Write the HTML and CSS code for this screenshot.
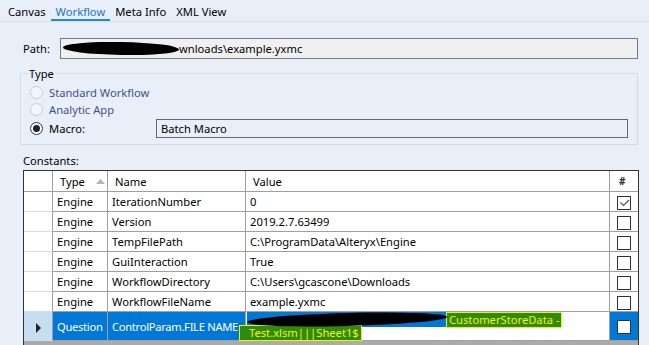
FILE: index.html
```html
<!DOCTYPE html>
<html lang="en">
<head>
    <meta charset="UTF-8">
    <title>Workflow Configuration</title>
    <link rel="stylesheet" href="styles.css">
</head>
<body>
    <div class="tabs">
        <span class="tab">Canvas</span>
        <span class="tab active">Workflow</span>
        <span class="tab">Meta Info</span>
        <span class="tab">XML View</span>
    </div>

    <div class="path-row">
        <label class="path-label">Path:</label>
        <div class="path-box"><span class="redact path-redact"></span>wnloads\example.yxmc</div>
    </div>

    <fieldset class="type-group">
        <legend>Type</legend>
        <div class="radio-row disabled">
            <span class="radio"></span>
            <span class="radio-text">Standard Workflow</span>
        </div>
        <div class="radio-row disabled">
            <span class="radio"></span>
            <span class="radio-text">Analytic App</span>
        </div>
        <div class="radio-row macro-row">
            <span class="radio checked"></span>
            <span class="radio-text macro-label">Macro:</span>
            <div class="macro-box">Batch Macro</div>
        </div>
    </fieldset>

    <div class="constants-label">Constants:</div>

    <div class="grid-wrap">
        <table class="grid">
            <colgroup>
                <col class="c-rh">
                <col class="c-type">
                <col class="c-name">
                <col class="c-value">
                <col class="c-flag">
            </colgroup>
            <thead>
                <tr>
                    <th class="rh"></th>
                    <th>Type<svg class="sort" width="9" height="5" viewBox="0 0 9 5"><path d="M0 5 L4.5 0 L9 5 Z" fill="#b4b4b4"/></svg></th>
                    <th>Name</th>
                    <th>Value</th>
                    <th class="flag hash">#</th>
                </tr>
            </thead>
            <tbody>
                <tr>
                    <td class="rh"></td><td>Engine</td><td>IterationNumber</td><td>0</td>
                    <td class="flag"><span class="cb"><svg width="11" height="11" viewBox="0 0 11 11"><path d="M1.5 5.5 L4.5 8.5 L10 3" fill="none" stroke="#555" stroke-width="1.2"/></svg></span></td>
                </tr>
                <tr>
                    <td class="rh"></td><td>Engine</td><td>Version</td><td>2019.2.7.63499</td>
                    <td class="flag"><span class="cb"></span></td>
                </tr>
                <tr>
                    <td class="rh"></td><td>Engine</td><td>TempFilePath</td><td>C:\ProgramData\Alteryx\Engine</td>
                    <td class="flag"><span class="cb"></span></td>
                </tr>
                <tr>
                    <td class="rh"></td><td>Engine</td><td>GuiInteraction</td><td>True</td>
                    <td class="flag"><span class="cb"></span></td>
                </tr>
                <tr>
                    <td class="rh"></td><td>Engine</td><td>WorkflowDirectory</td><td>C:\Users\gcascone\Downloads</td>
                    <td class="flag"><span class="cb"></span></td>
                </tr>
                <tr>
                    <td class="rh"></td><td>Engine</td><td>WorkflowFileName</td><td>example.yxmc</td>
                    <td class="flag"><span class="cb"></span></td>
                </tr>
                <tr class="selected">
                    <td class="rh"><span class="arrow"></span></td>
                    <td>Question</td>
                    <td>ControlParam.FILE NAME</td>
                    <td class="editing">
                        <div class="edit-line"><span class="sel-text"><span class="redact value-redact"></span><span class="marked">CustomerStoreData -</span></span></div>
                        <div class="edit-line"><span class="marked second">Test.xlsm|||Sheet1$</span></div>
                    </td>
                    <td class="flag"><span class="cb"></span></td>
                </tr>
            </tbody>
        </table>
    </div>
</body>
</html>
```

FILE: styles.css
```css
:root {
    --bg: #e9eff9;
    --text: #000000;
    --muted: #3f5189;
    --accent: #0078d7;
    --grid-line: #a0a0a0;
    --group-line: #d6dae1;
}

html, body {
    height: 100%;
}

body {
    margin: 0;
    background-color: var(--bg);
    font-family: "Segoe UI", "Noto Sans", sans-serif;
    font-size: 11.2px;
    color: var(--text);
    overflow: hidden;
}

/* tab strip */
.tabs {
    display: flex;
    padding: 0 0 0 3px;
    border-bottom: 1px solid #d8dde6;
}

.tab {
    padding: 4px 5px 0;
    line-height: 15px;
    border-bottom: 2px solid transparent;
}

.tab.active {
    color: #1a73c9;
    border-bottom-color: #1e88e5;
}

/* path */
.path-row {
    display: flex;
    align-items: center;
    margin: 16px 11px 0 23px;
}

.path-label {
    width: 37px;
}

.path-box {
    flex: 1;
    height: 19px;
    line-height: 19px;
    border: 1px solid #7c7c7c;
    background: #f0f0f0;
    padding-left: 2px;
    display: flex;
    align-items: center;
}

.redact {
    display: inline-block;
    background: #000;
    border-radius: 50%;
}

.path-redact {
    width: 116px;
    height: 13px;
    transform: rotate(1deg);
}

/* type group */
.type-group {
    margin: 7px 11px 0 20px;
    padding: 3px 9px 6px;
    border: 1px solid var(--group-line);
}

.type-group legend {
    padding: 0 1px;
    margin-left: -2px;
    line-height: 15px;
}

.radio-row {
    display: flex;
    align-items: center;
    height: 17px;
}

.radio {
    width: 11px;
    height: 11px;
    border: 1px solid #c9ccd2;
    border-radius: 50%;
    background: #f4f6fa;
    margin-right: 6px;
    display: flex;
    align-items: center;
    justify-content: center;
}

.radio.checked {
    border-color: #333;
    background: #fff;
}

.radio.checked::after {
    content: "";
    width: 7px;
    height: 7px;
    border-radius: 50%;
    background: #222;
}

.disabled .radio-text {
    color: var(--muted);
}

.macro-row {
    height: 20px;
}

.macro-label {
    width: 107px;
}

.macro-box {
    flex: 1;
    height: 17px;
    line-height: 17px;
    border: 1px solid #6a6a6a;
    padding-left: 4px;
}

/* constants grid */
.constants-label {
    margin: 8px 0 0 23px;
    line-height: 16px;
}

.grid-wrap {
    margin: 1px 10px 0 23px;
    border: 1px solid #333;
    background: #ababab;
    height: 220px;
}

.grid {
    width: 100%;
    table-layout: fixed;
    border-collapse: separate;
    border-spacing: 0;
}

.c-rh { width: 29px; }
.c-type { width: 55px; }
.c-name { width: 138px; }
.c-value { width: 364px; }

.grid th,
.grid td {
    background: #fff;
    border-right: 1px solid var(--grid-line);
    border-bottom: 1px solid var(--grid-line);
    padding: 0 0 0 4px;
    text-align: left;
    font-weight: normal;
    white-space: nowrap;
    overflow: visible;
}

.grid tr {
    height: 20px;
}

.grid thead tr {
    height: 21px;
}

.grid th {
    padding-left: 7px;
}

.grid td.rh,
.grid th.rh {
    padding: 0;
    border-bottom-color: #dcdcdc;
}

.grid thead th.rh {
    border-bottom-color: var(--grid-line);
}

.grid td:last-child,
.grid th:last-child {
    border-right: none;
}

.sort {
    margin-left: 11px;
    vertical-align: 2px;
}

.grid .hash {
    font-size: 10px;
    font-weight: bold;
    color: #3b2a4a;
    padding-left: 9px;
}

.grid td.flag {
    padding: 0;
    text-align: center;
}

.cb {
    display: inline-flex;
    width: 12px;
    height: 12px;
    border: 1px solid #333;
    background: #fff;
    vertical-align: middle;
    align-items: center;
    justify-content: center;
}

/* selected row */
.grid tr.selected {
    height: 29px;
}

.grid tr.selected td {
    background: var(--accent);
    color: #fff;
    letter-spacing: -0.3px;
}

.grid tr.selected td.rh {
    background: #c5def2;
    text-align: center;
}

.arrow {
    display: inline-block;
    width: 0;
    height: 0;
    border-top: 5px solid transparent;
    border-bottom: 5px solid transparent;
    border-left: 5px solid #222;
    vertical-align: middle;
}

.grid tr.selected td.editing {
    background: #fff;
    padding: 0 0 0 1px;
    vertical-align: top;
    letter-spacing: 0;
}

.edit-line {
    line-height: 14px;
    height: 14px;
}

.sel-text {
    display: inline-flex;
    align-items: center;
    background: var(--accent);
    height: 15px;
}

.value-redact {
    width: 200px;
    height: 13px;
    transform: rotate(-1.5deg);
}

.marked {
    display: inline-block;
    background: #2f8a10;
    color: #f6f600;
    box-shadow: 0 0 0 1px #f2f200;
    line-height: 14px;
    padding: 0 2px;
}

.marked.second {
    margin-left: -7px;
    padding-left: 9px;
}
```
